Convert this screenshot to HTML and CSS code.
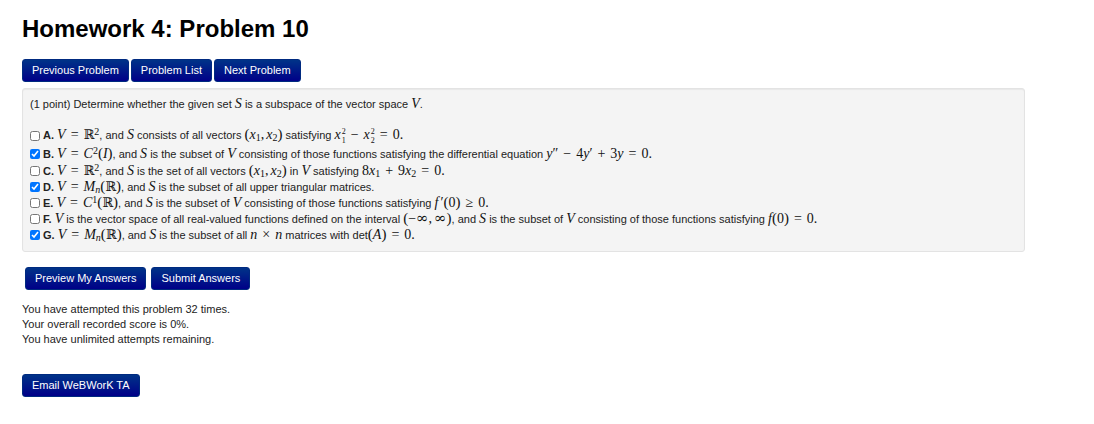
FILE: index.html
```html
<!DOCTYPE html>
<html lang="en">
<head>
    <meta charset="UTF-8">
    <meta name="viewport" content="width=device-width, initial-scale=1.0">
    <title>Homework 4: Problem 10</title>
    <link rel="stylesheet" href="styles.css">
</head>
<body>
    <h1>Homework 4: Problem 10</h1>
    <nav class="problem-nav">
        <a class="btn" href="#previous">Previous Problem</a>
        <a class="btn" href="#list">Problem List</a>
        <a class="btn" href="#next">Next Problem</a>
    </nav>
    <form id="problemForm">
        <div class="problem">
            <p class="question">(1 point) Determine whether the given set <span class="math"><i>S</i></span> is a subspace of the vector space <span class="math"><i>V</i></span>.</p>
            <div class="choice tall">
                <input type="checkbox" id="choiceA">
                <label for="choiceA"><b>A.</b> <span class="math"><i>V</i><span class="op">=</span><span class="bb">ℝ</span><sup>2</sup></span>, and <span class="math"><i>S</i></span> consists of all vectors <span class="math"><span class="paren">(</span><i>x</i><sub>1</sub>,<span class="thin"></span><i>x</i><sub>2</sub><span class="paren">)</span></span> satisfying <span class="math"><i>x</i><span class="stack"><span>2</span><span>1</span></span><span class="op">−</span><i>x</i><span class="stack"><span>2</span><span>2</span></span><span class="op">=</span>0.</span></label>
            </div>
            <div class="choice tall">
                <input type="checkbox" id="choiceB" checked>
                <label for="choiceB"><b>B.</b> <span class="math"><i>V</i><span class="op">=</span><i>C</i><sup>2</sup><span class="paren">(</span><i>I</i><span class="paren">)</span></span>, and <span class="math"><i>S</i></span> is the subset of <span class="math"><i>V</i></span> consisting of those functions satisfying the differential equation <span class="math"><i>y</i>″<span class="op">−</span>4<i>y</i>′<span class="op">+</span>3<i>y</i><span class="op">=</span>0.</span></label>
            </div>
            <div class="choice">
                <input type="checkbox" id="choiceC">
                <label for="choiceC"><b>C.</b> <span class="math"><i>V</i><span class="op">=</span><span class="bb">ℝ</span><sup>2</sup></span>, and <span class="math"><i>S</i></span> is the set of all vectors <span class="math"><span class="paren">(</span><i>x</i><sub>1</sub>,<span class="thin"></span><i>x</i><sub>2</sub><span class="paren">)</span></span> in <span class="math"><i>V</i></span> satisfying <span class="math">8<i>x</i><sub>1</sub><span class="op">+</span>9<i>x</i><sub>2</sub><span class="op">=</span>0.</span></label>
            </div>
            <div class="choice">
                <input type="checkbox" id="choiceD" checked>
                <label for="choiceD"><b>D.</b> <span class="math"><i>V</i><span class="op">=</span><i>M</i><sub><i>n</i></sub><span class="paren">(</span><span class="bb">ℝ</span><span class="paren">)</span></span>, and <span class="math"><i>S</i></span> is the subset of all upper triangular matrices.</label>
            </div>
            <div class="choice">
                <input type="checkbox" id="choiceE">
                <label for="choiceE"><b>E.</b> <span class="math"><i>V</i><span class="op">=</span><i>C</i><sup>1</sup><span class="paren">(</span><span class="bb">ℝ</span><span class="paren">)</span></span>, and <span class="math"><i>S</i></span> is the subset of <span class="math"><i>V</i></span> consisting of those functions satisfying <span class="math"><i>f</i><span class="thin"></span>′<span class="paren">(</span>0<span class="paren">)</span><span class="op">≥</span>0.</span></label>
            </div>
            <div class="choice">
                <input type="checkbox" id="choiceF">
                <label for="choiceF"><b>F.</b> <span class="math"><i>V</i></span> is the vector space of all real-valued functions defined on the interval <span class="math"><span class="paren">(</span>−<span class="inf">∞</span>,<span class="thin"></span><span class="inf">∞</span><span class="paren">)</span></span>, and <span class="math"><i>S</i></span> is the subset of <span class="math"><i>V</i></span> consisting of those functions satisfying <span class="math"><i>f</i><span class="paren">(</span>0<span class="paren">)</span><span class="op">=</span>0.</span></label>
            </div>
            <div class="choice">
                <input type="checkbox" id="choiceG" checked>
                <label for="choiceG"><b>G.</b> <span class="math"><i>V</i><span class="op">=</span><i>M</i><sub><i>n</i></sub><span class="paren">(</span><span class="bb">ℝ</span><span class="paren">)</span></span>, and <span class="math"><i>S</i></span> is the subset of all <span class="math"><i>n</i><span class="op">×</span><i>n</i></span> matrices with det<span class="math"><span class="paren">(</span><i>A</i><span class="paren">)</span><span class="op">=</span>0.</span></label>
            </div>
        </div>
        <div class="actions">
            <button class="btn" type="button">Preview My Answers</button>
            <button class="btn" type="submit">Submit Answers</button>
        </div>
    </form>
    <p class="attempts">
        You have attempted this problem 32 times.<br>
        Your overall recorded score is 0%.<br>
        You have unlimited attempts remaining.
    </p>
    <button class="btn" type="button">Email WeBWorK TA</button>
</body>
</html>
```

FILE: styles.css
```css
body {
    font-family: "Liberation Sans", Arial, sans-serif;
    font-size: 11px;
    line-height: 16px;
    margin: 0;
    padding: 14px 69px 24px 22px;
    background-color: white;
    color: #222;
}
h1 {
    margin: 0 0 15px;
    font-size: 24px;
    line-height: 30px;
    color: black;
}
.problem-nav {
    display: flex;
    gap: 2px;
    margin-bottom: 6px;
}
.btn {
    display: inline-block;
    box-sizing: border-box;
    height: 23px;
    padding: 0 9px;
    border: 1px solid #002a80;
    border-radius: 3px;
    background: linear-gradient(#003388, #000088);
    color: white;
    font-family: inherit;
    font-size: 11px;
    line-height: 21px;
    text-decoration: none;
    cursor: pointer;
}
.btn:hover {
    background: #000088;
}
.problem {
    padding: 7px 7px 8px;
    border: 1px solid #e3e3e3;
    border-radius: 3px;
    background-color: #f4f4f4;
    box-shadow: inset 0 1px 1px rgba(0, 0, 0, 0.05);
}
.question {
    margin: 0 0 15px;
}
.choice {
    display: flex;
    align-items: center;
    gap: 3px;
    height: 16px;
}
.choice.tall {
    height: 18px;
}
.choice input {
    flex: none;
    width: 10px;
    height: 10px;
    margin: 0;
}

/* formulas */
.math {
    font-family: "Liberation Serif", "Times New Roman", serif;
    font-size: 14px;
    line-height: 1;
    white-space: nowrap;
    color: #111;
}
.math sup,
.math sub {
    font-size: 10px;
    line-height: 0;
}
.math sub {
    vertical-align: -2px;
}
.math sup {
    vertical-align: 4px;
}
.bb,
.inf {
    font-family: "DejaVu Serif", serif;
    line-height: 0;
}
.bb {
    font-size: 13px;
}
.inf {
    font-size: 15px;
}
.paren {
    font-size: 15px;
}
.op {
    margin: 0 5px;
}
.thin {
    margin-left: 2px;
}
.stack {
    display: inline-flex;
    flex-direction: column;
    margin-left: 1px;
    font-size: 8px;
    line-height: 9px;
    vertical-align: middle;
}

.actions {
    display: flex;
    gap: 5px;
    margin: 15px 0 12px 3px;
}
.attempts {
    margin: 0 0 27px;
    line-height: 15px;
}
```
